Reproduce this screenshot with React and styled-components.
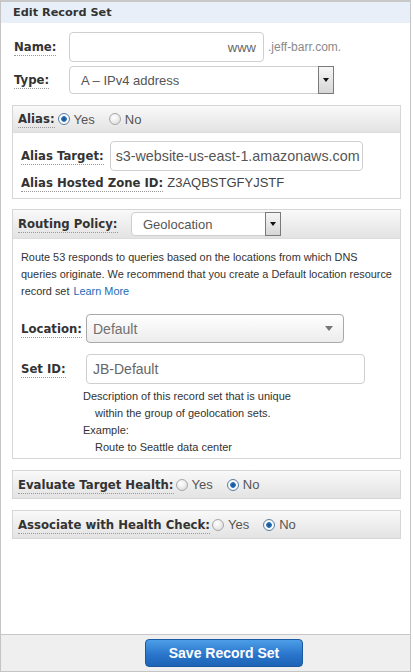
import * as React from "react";
import styled, { createGlobalStyle } from "styled-components";

const GlobalStyle = createGlobalStyle`
  html, body {
    margin: 0;
    padding: 0;
    background: #ffffff;
  }
  body {
    font-family: "Liberation Sans", Arial, sans-serif;
    color: #333;
  }
`;

const Frame = styled.div`
  box-sizing: border-box;
  width: 411px;
  height: 672px;
  border: 1px solid #c4c4c4;
  border-top: 2px solid #c8c8c8;
  display: flex;
  flex-direction: column;
  background: #fff;
`;

const Title = styled.div`
  height: 21px;
  line-height: 22px;
  padding-left: 12px;
  background: #e8eff8;
  font-family: "DejaVu Sans", Verdana, sans-serif;
  font-weight: bold;
  font-size: 11.3px;
  color: #333;
`;

const Body = styled.div`
  flex: 1;
  padding: 9px 9px 0 11px;
  display: flex;
  flex-direction: column;
`;

const Row = styled.div`
  display: flex;
  align-items: center;
  margin-top: ${(p) => p.$mt || 0}px;
  margin-bottom: ${(p) => p.$mb || 0}px;
  padding-left: ${(p) => p.$pl || 0}px;
`;

const Label = styled.span`
  display: inline-block;
  width: ${(p) => (p.$w ? `${p.$w}px` : "auto")};
  flex-shrink: 0;
  font-family: "DejaVu Sans", Verdana, sans-serif;
  font-weight: bold;
  font-size: 11.7px;
  color: #333;
  margin-right: ${(p) => p.$mr || 0}px;
  span {
    border-bottom: 1px dotted #999;
    padding-bottom: 1px;
  }
`;

const TextBox = styled.div`
  box-sizing: border-box;
  width: ${(p) => p.$w}px;
  height: 30px;
  border: 1px solid #cfcfcf;
  border-radius: 4px;
  background: #fff;
  display: flex;
  align-items: center;
  justify-content: ${(p) => (p.$right ? "flex-end" : "flex-start")};
  padding: 0 ${(p) => (p.$right ? 7 : 0)}px 0 ${(p) => p.$pl ?? 12}px;
  font-size: ${(p) => p.$fs || 13}px;
  color: ${(p) => p.$color || "#666"};
  white-space: nowrap;
  overflow: hidden;
`;

const Suffix = styled.span`
  margin-left: 4px;
  font-size: 12px;
  color: #8a8a8a;
`;

const SelectBox = styled.div`
  box-sizing: border-box;
  width: ${(p) => p.$w}px;
  height: ${(p) => p.$h || 28}px;
  border: 1px solid #cfcfcf;
  border-radius: 4px 0 0 4px;
  background: #fff;
  display: flex;
  align-items: stretch;
  font-size: 13px;
  color: #555;
`;

const SelectText = styled.span`
  flex: 1;
  display: flex;
  align-items: center;
  padding-left: ${(p) => p.$pl || 11}px;
`;

const ArrowBox = styled.span`
  box-sizing: border-box;
  width: 16px;
  margin: -1px -1px -1px 0;
  border: 1px solid #7a7a7a;
  background: linear-gradient(#f6f6f6, #d6d6d6);
  display: flex;
  align-items: center;
  justify-content: center;
  &::after {
    content: "";
    border-left: 3.5px solid transparent;
    border-right: 3.5px solid transparent;
    border-top: 4px solid #111;
  }
`;

const SoftSelect = styled.div`
  box-sizing: border-box;
  width: 258px;
  height: 29px;
  border: 1px solid #a9a9a9;
  border-radius: 4px;
  background: linear-gradient(#ffffff, #ececec);
  display: flex;
  align-items: center;
  justify-content: space-between;
  padding: 0 10px 0 6px;
  font-size: 14px;
  color: #707070;
  &::after {
    content: "";
    border-left: 4px solid transparent;
    border-right: 4px solid transparent;
    border-top: 5px solid #777;
  }
`;

const Panel = styled.div`
  border: 1px solid #d6d6d6;
  margin-bottom: ${(p) => p.$mb || 0}px;
`;

const PanelHead = styled.div`
  box-sizing: border-box;
  height: ${(p) => p.$h || 27}px;
  display: flex;
  align-items: center;
  padding-left: 5px;
  background: linear-gradient(#f9f9f9, #e3e3e3);
  border-bottom: ${(p) => (p.$flat ? "none" : "1px solid #dcdcdc")};
`;

const PanelBody = styled.div`
  padding: ${(p) => p.$pad};
  display: flex;
  flex-direction: column;
`;

const Choice = styled.label`
  display: inline-flex;
  align-items: center;
  font-size: 13px;
  color: ${(p) => p.$color || "#555"};
  margin-left: ${(p) => p.$ml || 0}px;
`;

const Radio = styled.span`
  box-sizing: border-box;
  width: 12px;
  height: 12px;
  border-radius: 50%;
  border: 1px solid ${(p) => (p.$checked ? "#5a7fa5" : "#a8a8a8")};
  background: ${(p) =>
    p.$checked
      ? "radial-gradient(circle, #0f4f8c 0, #2f74b8 2.5px, #ffffff 3.2px, #e8e8e8 100%)"
      : "radial-gradient(circle at 40% 35%, #ffffff 0, #f0f0f0 40%, #d4d4d4 100%)"};
  margin-right: 4px;
`;

const Help = styled.p`
  margin: 0;
  font-size: 10.9px;
  line-height: 17px;
  color: #333;
`;

const Link = styled.a`
  color: #1b6bb5;
  text-decoration: none;
  padding-left: 4px;
`;

const Notes = styled.div`
  padding-left: 62px;
  padding-bottom: 2px;
`;

const Note = styled.div`
  font-size: 11px;
  line-height: 17px;
  color: #333;
  padding-left: ${(p) => p.$indent || 0}px;
`;

const Footer = styled.div`
  height: 37px;
  border-top: 1px solid #c8c8c8;
  background: #efefef;
  display: flex;
  justify-content: center;
  align-items: flex-start;
  padding: 4px 0 0 37px;
  box-sizing: border-box;
`;

const SaveButton = styled.button`
  box-sizing: border-box;
  width: 158px;
  height: 28px;
  border: 1px solid #1a5aa0;
  border-radius: 4px;
  background: linear-gradient(#4d9ee8, #2a76cc 55%, #1c63b6);
  color: #fff;
  font-family: "Liberation Sans", Arial, sans-serif;
  font-weight: bold;
  font-size: 14px;
  cursor: pointer;
`;

const RadioPair = ({ checked, gap = 12 }) => (
  <>
    <Choice>
      <Radio $checked={checked === "yes"} />
      Yes
    </Choice>
    <Choice $ml={gap}>
      <Radio $checked={checked === "no"} />
      No
    </Choice>
  </>
);

const App = () => {
  return (
    <>
      <GlobalStyle />
      <Frame>
        <Title>Edit Record Set</Title>
        <Body>
          <Row $mb={4} $pl={2}>
            <Label $w={55}>
              <span>Name:</span>
            </Label>
            <TextBox $w={195} $right>
              www
            </TextBox>
            <Suffix>.jeff-barr.com.</Suffix>
          </Row>
          <Row $mb={11} $pl={2}>
            <Label $w={55}>
              <span>Type:</span>
            </Label>
            <SelectBox $w={265}>
              <SelectText>A – IPv4 address</SelectText>
              <ArrowBox />
            </SelectBox>
          </Row>

          <Panel $mb={10}>
            <PanelHead>
              <Label $mr={3}>
                <span>Alias:</span>
              </Label>
              <RadioPair checked="yes" gap={14} />
            </PanelHead>
            <PanelBody $pad="8px 0 8px 8px">
              <Row $mb={4}>
                <Label $mr={6}>
                  <span>Alias Target:</span>
                </Label>
                <TextBox $w={253} $color="#555" $pl={5} $fs={14.3}>
                  s3-website-us-east-1.amazonaws.com
                </TextBox>
              </Row>
              <Row>
                <Label $mr={4}>
                  <span>Alias Hosted Zone ID:</span>
                </Label>
                <Choice $color="#444">Z3AQBSTGFYJSTF</Choice>
              </Row>
            </PanelBody>
          </Panel>

          <Panel $mb={11}>
            <PanelHead $h={29}>
              <Label $w={113}>
                <span>Routing Policy:</span>
              </Label>
              <SelectBox $w={150} $h={24}>
                <SelectText $pl={11}>Geolocation</SelectText>
                <ArrowBox />
              </SelectBox>
            </PanelHead>
            <PanelBody $pad="10px 4px 0 8px">
              <Help>
                Route 53 responds to queries based on the locations from which
                DNS queries originate. We recommend that you create a Default
                location resource record set
                <Link href="#">Learn More</Link>
              </Help>
              <Row $mt={14} $mb={11}>
                <Label $w={65}>
                  <span>Location:</span>
                </Label>
                <SoftSelect>Default</SoftSelect>
              </Row>
              <Row $mb={4}>
                <Label $w={65}>
                  <span>Set ID:</span>
                </Label>
                <TextBox $w={279} $color="#666" $pl={6} $fs={14}>
                  JB-Default
                </TextBox>
              </Row>
              <Notes>
                <Note>Description of this record set that is unique</Note>
                <Note $indent={12}>within the group of geolocation sets.</Note>
                <Note>Example:</Note>
                <Note $indent={12}>Route to Seattle data center</Note>
              </Notes>
            </PanelBody>
          </Panel>

          <Panel $mb={11}>
            <PanelHead $flat>
              <Label $mr={2}>
                <span>Evaluate Target Health:</span>
              </Label>
              <RadioPair checked="no" gap={14} />
            </PanelHead>
          </Panel>

          <Panel>
            <PanelHead $flat>
              <Label $mr={2}>
                <span>Associate with Health Check:</span>
              </Label>
              <RadioPair checked="no" gap={14} />
            </PanelHead>
          </Panel>
        </Body>
        <Footer>
          <SaveButton>Save Record Set</SaveButton>
        </Footer>
      </Frame>
    </>
  );
};

export default App;
